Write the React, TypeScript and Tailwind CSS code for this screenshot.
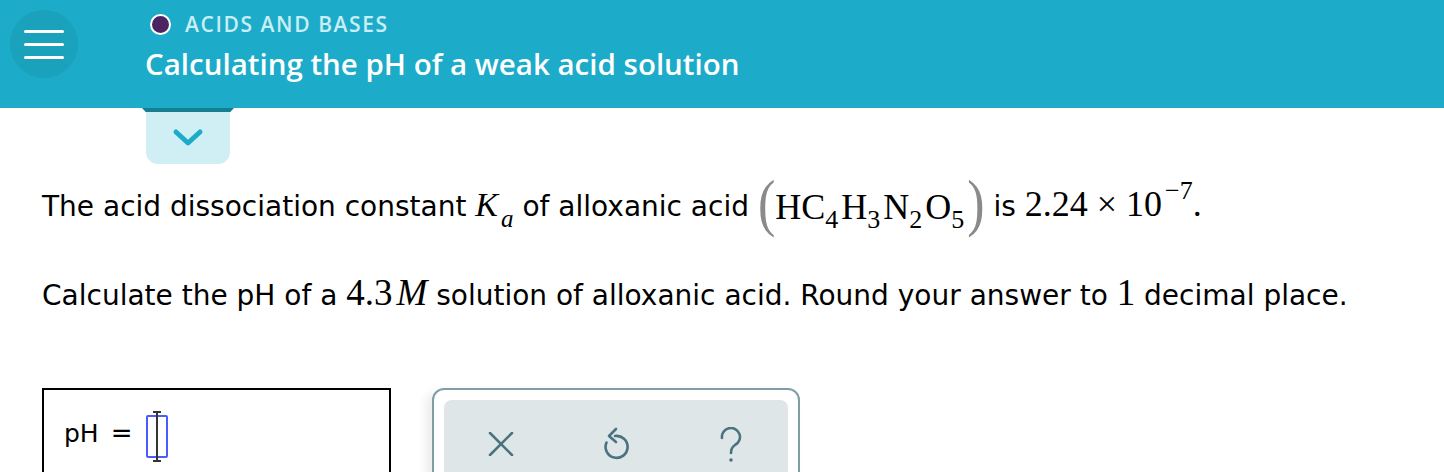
import React from "react";

const serif = { fontFamily: '"Liberation Serif", "Times New Roman", serif' };

function Sub({ children }: { children: React.ReactNode }) {
  return <span className="inline-block text-[26px] relative top-[9px] mr-[3px]">{children}</span>;
}

export default function App() {
  return (
    <div className="w-[1444px] h-[472px] overflow-hidden bg-white relative" style={{ fontFamily: '"DejaVu Sans", Verdana, sans-serif' }}>
      {/* Header */}
      <div className="h-[108px] bg-[#1cabc8] flex" style={{ fontFamily: '"Open Sans", Lato, sans-serif' }}>
        <div className="w-[145px] shrink-0 pl-[10px] pt-[10px]">
          <div className="w-[68px] h-[68px] rounded-full bg-[#1aa2bd] flex flex-col items-center justify-center gap-[10px]">
            <div className="w-[40px] h-[3px] bg-white rounded-full" />
            <div className="w-[40px] h-[3px] bg-white rounded-full" />
            <div className="w-[40px] h-[3px] bg-white rounded-full" />
          </div>
        </div>
        <div className="flex flex-col pt-[10px]">
          <div className="flex items-center h-[28px] pl-[5px]">
            <div className="w-[21px] h-[21px] rounded-full bg-[#4c2462] border-2 border-white" />
            <span className="ml-[14px] text-[21px] text-[#c9eef5] font-semibold tracking-[1.6px] relative top-[1px]">ACIDS AND BASES</span>
          </div>
          <div className="text-[29.5px] text-white font-semibold mt-[7px] leading-[38px]">Calculating the pH of a weak acid solution</div>
        </div>
      </div>

      {/* dropdown tab */}
      <div className="ml-[142px] w-[92px] flex flex-col items-center">
        <div className="w-[92px] h-[4px] bg-[#177f93] [clip-path:polygon(0_0,100%_0,96%_100%,4%_100%)]" />
        <div className="w-[84px] h-[52px] bg-[#cfeff5] rounded-b-[12px] flex items-center justify-center">
          <svg width="32" height="22" viewBox="0 0 32 22">
            <path d="M4 5 L16 16 L28 5" fill="none" stroke="#1cabc8" strokeWidth="5" strokeLinecap="round" strokeLinejoin="round" />
          </svg>
        </div>
      </div>

      {/* Question */}
      <div className="pl-[42px] text-black">
        <div className="flex items-baseline h-[64px] pt-[18px] text-[28px] leading-[34px] whitespace-nowrap">
          <span>The acid dissociation constant&nbsp;</span>
          <span style={serif} className="text-[34px] italic">K<span className="inline-block text-[25px] relative top-[11px] ml-[3px]">a</span></span>
          <span>&nbsp;of alloxanic acid&nbsp;</span>
          <span style={serif} className="flex items-baseline relative top-[3px]">
            <span className="inline-block text-[52px] text-[#8a8a8a] scale-y-[1.2] relative top-[2px]">(</span>
            <span className="text-[36px]">
              HC<Sub>4</Sub>H<Sub>3</Sub>N<Sub>2</Sub>O<Sub>5</Sub>
            </span>
            <span className="inline-block text-[52px] text-[#8a8a8a] scale-y-[1.2] relative top-[2px]">)</span>
          </span>
          <span>&nbsp;is&nbsp;</span>
          <span style={serif} className="text-[36px]">
            2.24 × 10<span className="inline-block text-[26px] relative -top-[17px] ml-[3px]">−7</span>.
          </span>
        </div>

        <div className="flex items-baseline mt-[48px] text-[28px] leading-[34px] whitespace-nowrap">
          <span>Calculate the pH of a&nbsp;</span>
          <span style={serif} className="text-[37px]">4.3<i className="ml-[4px]">M</i></span>
          <span>&nbsp;solution of alloxanic acid. Round your answer to&nbsp;</span>
          <span style={serif} className="text-[37px]">1</span>
          <span>&nbsp;decimal place.</span>
        </div>

        <div className="flex mt-[75px] gap-[41px]">
          <div className="w-[349px] h-[130px] border-2 border-black flex items-start pt-[25px] pl-[20px]">
            <span className="text-[25px] leading-[32px] relative top-[3px]">pH</span>
            <span className="text-[26px] ml-[12px] mr-[14px] leading-[32px] relative top-[2px]">=</span>
            <div className="relative w-[22px] h-[43px] border-2 border-[#4b5cff] rounded-[2px]">
              <div className="absolute left-[8px] -top-[6px] w-[2px] h-[51px] bg-[#333]" />
              <div className="absolute left-[5px] -top-[6px] w-[8px] h-[2px] bg-[#333]" />
              <div className="absolute left-[5px] -bottom-[6px] w-[8px] h-[2px] bg-[#333]" />
            </div>
          </div>
          <div className="w-[368px] h-[130px] border-2 border-[#7f9ea6] rounded-[12px] p-[10px] shadow-[-6px_4px_10px_rgba(0,0,0,0.08)]">
            <div className="h-full bg-[#dfe6e8] rounded-[8px] flex items-start pt-[27px]">
              <div className="w-[115px] flex justify-center pt-[5px]">
                <svg width="26" height="24" viewBox="0 0 26 24">
                  <path d="M2 1 L24 23 M24 1 L2 23" stroke="#4a7380" strokeWidth="2.6" strokeLinecap="round" />
                </svg>
              </div>
              <div className="w-[115px] flex justify-center pr-[2px]">
                <svg width="30" height="34" viewBox="0 0 30 34">
                  <path d="M6.5 15.5 A11 11 0 1 0 15 9" fill="none" stroke="#4a7380" strokeWidth="2.6" strokeLinecap="round" />
                  <path d="M16 2 L9 9 L16 15" fill="none" stroke="#4a7380" strokeWidth="2.6" strokeLinecap="round" strokeLinejoin="round" />
                </svg>
              </div>
              <div className="w-[115px] flex justify-center">
                <svg width="26" height="36" viewBox="0 0 26 36">
                  <path d="M4 11 A9 9 0 1 1 17 18 C14 20 13 22 13 26" fill="none" stroke="#4a7380" strokeWidth="2.6" strokeLinecap="round" />
                  <circle cx="13" cy="33" r="1.8" fill="#4a7380" />
                </svg>
              </div>
            </div>
          </div>
        </div>
      </div>
    </div>
  );
}
